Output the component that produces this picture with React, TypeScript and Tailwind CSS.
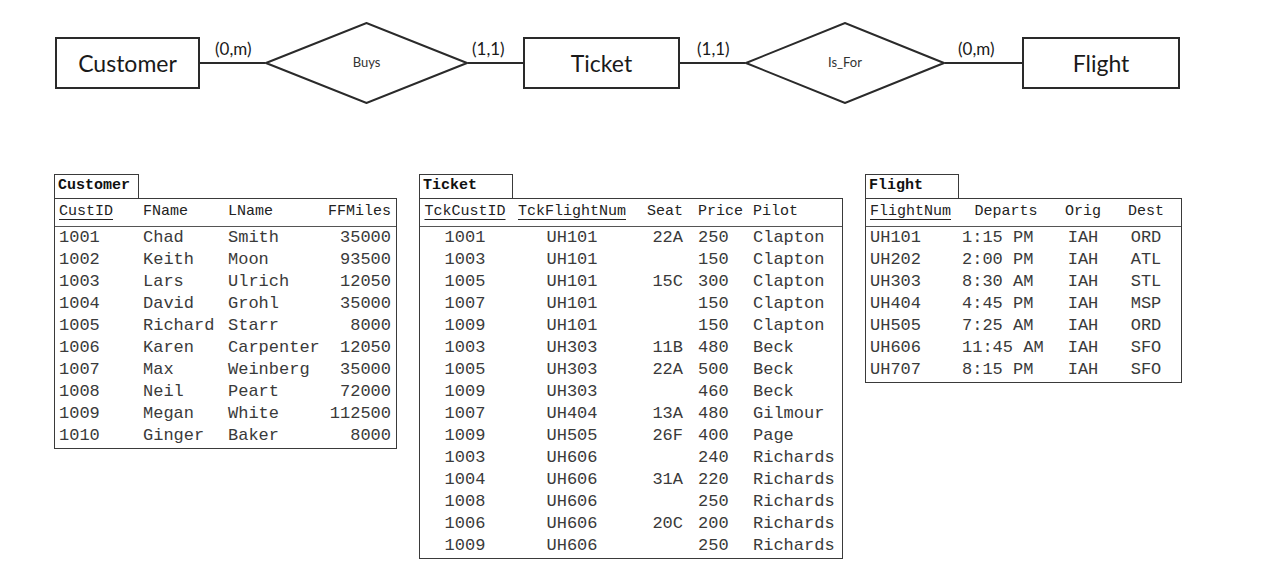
import type { ReactNode } from "react";

type Col = { head: string; key?: boolean; cls: string; headCls?: string };

const customers = [
  ["1001", "Chad", "Smith", "35000"],
  ["1002", "Keith", "Moon", "93500"],
  ["1003", "Lars", "Ulrich", "12050"],
  ["1004", "David", "Grohl", "35000"],
  ["1005", "Richard", "Starr", "8000"],
  ["1006", "Karen", "Carpenter", "12050"],
  ["1007", "Max", "Weinberg", "35000"],
  ["1008", "Neil", "Peart", "72000"],
  ["1009", "Megan", "White", "112500"],
  ["1010", "Ginger", "Baker", "8000"],
];

const tickets = [
  ["1001", "UH101", "22A", "250", "Clapton"],
  ["1003", "UH101", "", "150", "Clapton"],
  ["1005", "UH101", "15C", "300", "Clapton"],
  ["1007", "UH101", "", "150", "Clapton"],
  ["1009", "UH101", "", "150", "Clapton"],
  ["1003", "UH303", "11B", "480", "Beck"],
  ["1005", "UH303", "22A", "500", "Beck"],
  ["1009", "UH303", "", "460", "Beck"],
  ["1007", "UH404", "13A", "480", "Gilmour"],
  ["1009", "UH505", "26F", "400", "Page"],
  ["1003", "UH606", "", "240", "Richards"],
  ["1004", "UH606", "31A", "220", "Richards"],
  ["1008", "UH606", "", "250", "Richards"],
  ["1006", "UH606", "20C", "200", "Richards"],
  ["1009", "UH606", "", "250", "Richards"],
];

const flights = [
  ["UH101", "1:15 PM", "IAH", "ORD"],
  ["UH202", "2:00 PM", "IAH", "ATL"],
  ["UH303", "8:30 AM", "IAH", "STL"],
  ["UH404", "4:45 PM", "IAH", "MSP"],
  ["UH505", "7:25 AM", "IAH", "ORD"],
  ["UH606", "11:45 AM", "IAH", "SFO"],
  ["UH707", "8:15 PM", "IAH", "SFO"],
];

const customerCols: Col[] = [
  { head: "CustID", key: true, cls: "w-[84px] text-left" },
  { head: "FName", cls: "w-[85px] text-left" },
  { head: "LName", cls: "flex-1 text-left" },
  { head: "FFMiles", cls: "w-[70px] text-right" },
];

const ticketCols: Col[] = [
  { head: "TckCustID", key: true, cls: "w-[84px] mr-[9px] text-center" },
  { head: "TckFlightNum", key: true, cls: "w-[112px] text-center" },
  { head: "Seat", cls: "w-[55px] text-right" },
  { head: "Price", cls: "w-[70px] pl-[15px] text-left" },
  { head: "Pilot", cls: "flex-1 text-left" },
];

const flightCols: Col[] = [
  { head: "FlightNum", key: true, cls: "w-[92px] text-left" },
  { head: "Departs", cls: "w-[88px] text-left", headCls: "w-[88px] text-center" },
  { head: "Orig", cls: "w-[66px] text-center" },
  { head: "Dest", cls: "flex-1 text-center" },
];

function DataTable({
  title,
  tabW,
  boxW,
  pad,
  cols,
  rows,
}: {
  title: string;
  tabW: string;
  boxW: string;
  pad: string;
  cols: Col[];
  rows: string[][];
}) {
  return (
    <div className="flex flex-col font-['Liberation_Mono',monospace]">
      <div
        className={`${tabW} h-[24px] border-[1.5px] border-b-0 border-[#3a3a3a] px-[3px] text-[15px] leading-[22px] font-bold text-[#111]`}
      >
        {title}
      </div>
      <div className={`${boxW} border-[1.5px] border-[#3a3a3a] pb-[1px]`}>
        <div className={`flex h-[28px] items-center border-b-[1.5px] border-[#555] ${pad} text-[15px] text-[#222]`}>
          {cols.map((c) => (
            <div key={c.head} className={`${c.headCls ?? c.cls} whitespace-nowrap`}>
              <span className={c.key ? "underline underline-offset-[4px] decoration-[1px]" : ""}>{c.head}</span>
            </div>
          ))}
        </div>
        {rows.map((r, i) => (
          <div key={i} className={`flex h-[22px] items-center ${pad} text-[17px] text-[#3a3a3a]`}>
            {r.map((v, j) => (
              <div key={j} className={`${cols[j].cls} whitespace-pre`}>
                {v}
              </div>
            ))}
          </div>
        ))}
      </div>
    </div>
  );
}

function Entity({ name, w }: { name: string; w: string }) {
  return (
    <div
      className={`${w} h-[52px] flex items-center justify-center border-2 border-[#2a2a2a] text-[23px] text-[#1a1a1a]`}
    >
      {name}
    </div>
  );
}

function Link({ label, w, lpad }: { label: string; w: string; lpad: string }) {
  return (
    <div className={`${w} flex flex-col`}>
      <div className={`h-[22px] text-[17px] leading-[17px] text-[#1a1a1a] ${lpad}`}>{label}</div>
      <div className="h-[2px] bg-[#2a2a2a]" />
      <div className="h-[22px]" />
    </div>
  );
}

function Relation({ name, w, wpx }: { name: string; w: string; wpx: number }) {
  return (
    <div className={`relative ${w} h-[82px] flex items-center justify-center`}>
      <svg className="absolute inset-0" width={wpx} height={82} viewBox={`0 0 ${wpx} 82`}>
        <polygon
          points={`1,41 ${wpx / 2},1 ${wpx - 1},41 ${wpx / 2},81`}
          fill="none"
          stroke="#2a2a2a"
          strokeWidth="2"
        />
      </svg>
      <span className="relative text-[13px] text-[#333]">{name}</span>
    </div>
  );
}

function Diagram(): ReactNode {
  return (
    <div className="flex items-center pl-[55px] pt-[22px] font-['Lato',sans-serif]">
      <Entity name="Customer" w="w-[145px]" />
      <Link label="(0,m)" w="w-[65px]" lpad="pl-[15px]" />
      <Relation name="Buys" w="w-[203px]" wpx={203} />
      <Link label="(1,1)" w="w-[55px]" lpad="pl-[4px]" />
      <Entity name="Ticket" w="w-[157px]" />
      <Link label="(1,1)" w="w-[65px]" lpad="pl-[17px]" />
      <Relation name="Is_For" w="w-[200px]" wpx={200} />
      <Link label="(0,m)" w="w-[77px]" lpad="pl-[13px]" />
      <Entity name="Flight" w="w-[158px]" />
    </div>
  );
}

export default function App() {
  return (
    <div className="w-[1271px] h-[561px] bg-white overflow-hidden">
      <Diagram />
      <div className="flex items-start gap-[22px] pl-[54px] mt-[70px]">
        <DataTable title="Customer" tabW="w-[85px]" boxW="w-[343px]" pad="pl-[4px] pr-[5px]" cols={customerCols} rows={customers} />
        <DataTable title="Ticket" tabW="w-[94px]" boxW="w-[424px]" pad="pl-[3px] pr-[5px]" cols={ticketCols} rows={tickets} />
        <DataTable title="Flight" tabW="w-[94px]" boxW="w-[317px]" pad="pl-[4px] pr-[5px]" cols={flightCols} rows={flights} />
      </div>
    </div>
  );
}
